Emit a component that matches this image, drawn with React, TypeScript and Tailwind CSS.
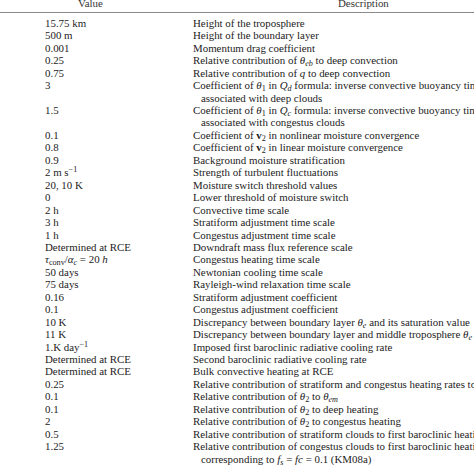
import type { ReactNode } from 'react';

const Th = ({ s }: { s: ReactNode }) => (
  <>
    <i>θ</i>
    <sub>{s}</sub>
  </>
);

const V2 = () => (
  <>
    <b>v</b>
    <sub>2</sub>
  </>
);

type Row = { v: ReactNode; d: ReactNode; more?: ReactNode };

const rows: Row[] = [
  { v: '15.75 km', d: 'Height of the troposphere' },
  { v: '500 m', d: 'Height of the boundary layer' },
  { v: '0.001', d: 'Momentum drag coefficient' },
  { v: '0.25', d: <>Relative contribution of <Th s={<i>eb</i>} /> to deep convection</> },
  { v: '0.75', d: <>Relative contribution of <i>q</i> to deep convection</> },
  {
    v: '3',
    d: <>Coefficient of <Th s="1" /> in <i>Q</i><sub><i>d</i></sub> formula: inverse convective buoyancy time scale</>,
    more: 'associated with deep clouds',
  },
  {
    v: '1.5',
    d: <>Coefficient of <Th s="1" /> in <i>Q</i><sub><i>c</i></sub> formula: inverse convective buoyancy time scale</>,
    more: 'associated with congestus clouds',
  },
  { v: '0.1', d: <>Coefficient of <V2 /> in nonlinear moisture convergence</> },
  { v: '0.8', d: <>Coefficient of <V2 /> in linear moisture convergence</> },
  { v: '0.9', d: 'Background moisture stratification' },
  { v: <>2 m s<sup>−1</sup></>, d: 'Strength of turbulent fluctuations' },
  { v: '20, 10 K', d: 'Moisture switch threshold values' },
  { v: '0', d: 'Lower threshold of moisture switch' },
  { v: '2 h', d: 'Convective time scale' },
  { v: '3 h', d: 'Stratiform adjustment time scale' },
  { v: '1 h', d: 'Congestus adjustment time scale' },
  { v: 'Determined at RCE', d: 'Downdraft mass flux reference scale' },
  {
    v: <><i>τ</i><sub>conv</sub>/<i>α</i><sub><i>c</i></sub> = 20 <i>h</i></>,
    d: 'Congestus heating time scale',
  },
  { v: '50 days', d: 'Newtonian cooling time scale' },
  { v: '75 days', d: 'Rayleigh-wind relaxation time scale' },
  { v: '0.16', d: 'Stratiform adjustment coefficient' },
  { v: '0.1', d: 'Congestus adjustment coefficient' },
  { v: '10 K', d: <>Discrepancy between boundary layer <Th s={<i>e</i>} /> and its saturation value</> },
  { v: '11 K', d: <>Discrepancy between boundary layer and middle troposphere <Th s={<i>e</i>} /></> },
  { v: <>1.K day<sup>−1</sup></>, d: 'Imposed first baroclinic radiative cooling rate' },
  { v: 'Determined at RCE', d: 'Second baroclinic radiative cooling rate' },
  { v: 'Determined at RCE', d: 'Bulk convective heating at RCE' },
  { v: '0.25', d: 'Relative contribution of stratiform and congestus heating rates to' },
  { v: '0.1', d: <>Relative contribution of <Th s="2" /> to <Th s={<i>em</i>} /></> },
  { v: '0.1', d: <>Relative contribution of <Th s="2" /> to deep heating</> },
  { v: '2', d: <>Relative contribution of <Th s="2" /> to congestus heating</> },
  { v: '0.5', d: 'Relative contribution of stratiform clouds to first baroclinic heating' },
  {
    v: '1.25',
    d: 'Relative contribution of congestus clouds to first baroclinic heating',
    more: <>corresponding to <i>f</i><sub><i>s</i></sub> = <i>fc</i> = 0.1 (KM08a)</>,
  },
];

export default function App() {
  return (
    <div className="w-[474px] h-[474px] overflow-hidden bg-white text-[#222] text-[10.9px] leading-[12.46px] font-['Liberation_Serif',serif]">
      <div className="-mt-[3px]">
        <div className="flex h-[16px] border-b border-[#8a8a8a] whitespace-nowrap text-[#333]">
          <span className="w-[338px] pl-[78px]">Value</span>
          <span>Description</span>
        </div>
        <div className="pt-[3.8px]">
          {rows.map((r, i) => (
            <div key={i} className="flex whitespace-nowrap">
              <div className="w-[193px] shrink-0 pl-[45px]">{r.v}</div>
              <div className="flex flex-col">
                <span>{r.d}</span>
                {r.more && <span className="pl-[8px]">{r.more}</span>}
              </div>
            </div>
          ))}
        </div>
      </div>
    </div>
  );
}
